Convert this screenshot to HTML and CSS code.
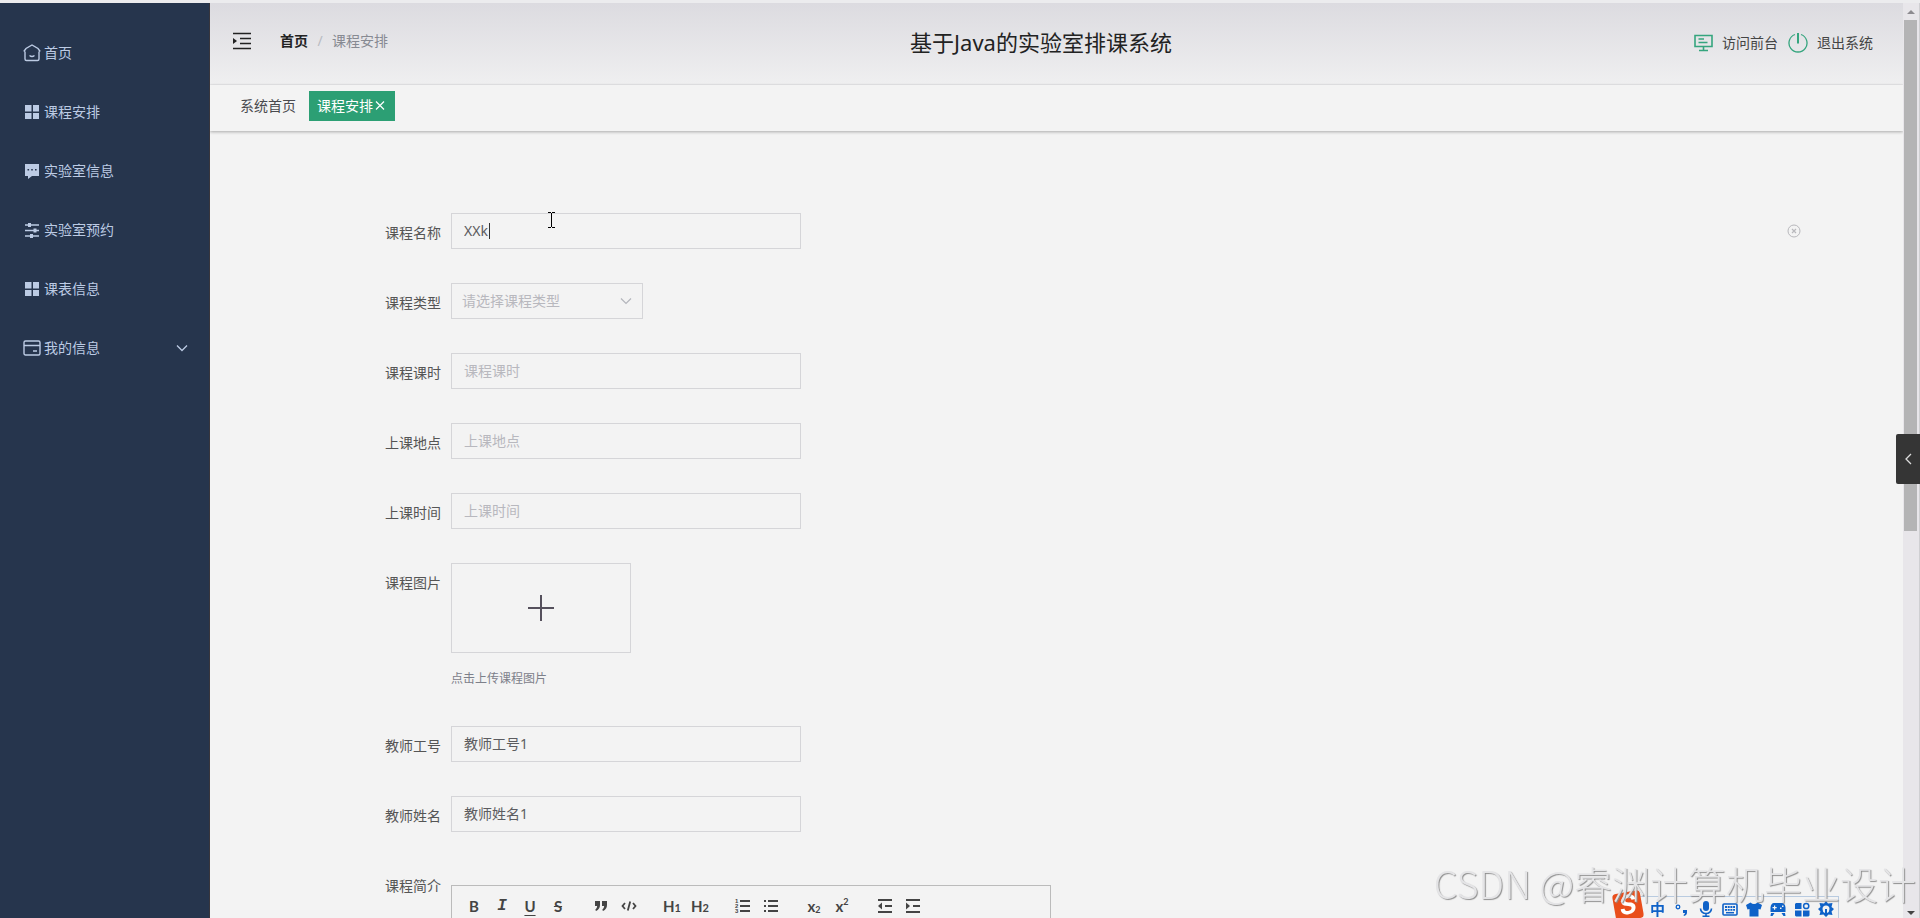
FILE: index.html
```html
<!DOCTYPE html>
<html lang="zh-CN">
<head>
<meta charset="utf-8">
<title>基于Java的实验室排课系统</title>
<link rel="stylesheet" href="styles.css">
</head>
<body>
<div class="shell">
  <nav class="sidebar">
    <a class="menu-item" href="#"><svg class="menu-icon" viewBox="0 0 18 18"><path d="M2 7.500V15q0 1.500 1.500 1.500h11Q16 16.500 16 15V7.500M.8 7.500L3 4.500 9 1l6 3.500 2.200 3M6.500 11.500q2.500 2 5 0" fill="none" stroke="currentColor" stroke-width="1.400"/></svg>首页</a>
    <a class="menu-item" href="#"><svg class="menu-icon" viewBox="0 0 18 18"><path d="M2 2h6.500v6.500H2zM10 2h6v6.500h-6zM2 10h6.500v6H2zM10 10h6v6h-6z" fill="currentColor"/></svg>课程安排</a>
    <a class="menu-item" href="#"><svg class="menu-icon" viewBox="0 0 18 18"><path fill-rule="evenodd" d="M2 2h14v12H9l-4 3v-3H2zM4.500 7v1.600h1.600V7zM8.200 7v1.600h1.600V7zM12 7v1.600h1.600V7z" fill="currentColor"/></svg>实验室信息</a>
    <a class="menu-item" href="#"><svg class="menu-icon" viewBox="0 0 18 18"><path d="M2 4h14M2 9.500h14M2 15h14" stroke="currentColor" stroke-width="1.400"/><path d="M5 2h3v4H5zM10.500 7.500h3v4h-3zM7 13h3v4H7z" fill="currentColor"/></svg>实验室预约</a>
    <a class="menu-item" href="#"><svg class="menu-icon" viewBox="0 0 18 18"><path d="M2 2h6.500v6.500H2zM10 2h6v6.500h-6zM2 10h6.500v6H2zM10 10h6v6h-6z" fill="currentColor"/></svg>课表信息</a>
    <a class="menu-item" href="#"><svg class="menu-icon" viewBox="0 0 18 18"><rect x="1" y="2" width="16" height="14" rx="1.500" fill="none" stroke="currentColor" stroke-width="1.400"/><path d="M1 6.500h16M10 12h4" stroke="currentColor" stroke-width="1.400"/></svg>我的信息<svg class="menu-arrow" viewBox="0 0 12 12"><path d="M1 3.500l5 5 5-5" fill="none" stroke="currentColor" stroke-width="1.300"/></svg></a>
  </nav>

  <div class="main">
    <header class="header">
      <div class="header-left">
        <button class="fold" type="button" aria-label="收起菜单"><svg viewBox="0 0 20 18"><path d="M1 1.500h18M8 6.500h11M8 11.500h11M1 16.500h18" stroke="#222" stroke-width="1.300"/><path d="M1 6l4 3-4 3z" fill="#222"/></svg></button>
        <a class="crumb-home" href="#">首页</a><span class="crumb-slash">/</span><span class="crumb">课程安排</span>
      </div>
      <h1 class="title">基于Java的实验室排课系统</h1>
      <div class="header-right">
        <a class="action" href="#"><svg class="monitor" viewBox="0 0 19 18"><path d="M1 1.500h17v11H1zM9.500 12.500V16M5 16.500h9M4.500 5H10M4.500 8.500h9" fill="none" stroke="currentColor" stroke-width="1.600"/></svg>访问前台</a>
        <a class="action" href="#"><svg class="power" viewBox="0 0 20 20"><path d="M7 1.500a9 9 0 1 0 6 0" fill="none" stroke="currentColor" stroke-width="1.300"/><path d="M10 0v10.500" stroke="currentColor" stroke-width="2"/></svg>退出系统</a>
      </div>
    </header>

    <div class="tabs">
      <a class="tab" href="#">系统首页</a>
      <a class="tab tab-active" href="#">课程安排<svg class="tab-close" viewBox="0 0 14 14"><path d="M3 2.500l8 8M11 2.500l-8 8" stroke="#fff" stroke-width="1.200"/></svg></a>
    </div>

    <form class="form">
      <div class="row">
        <label class="label" for="name">课程名称</label>
        <div class="field"><input class="input" id="name" type="text" value="XXk"><i class="caret"></i></div>
        <button class="clear" type="button" aria-label="清除"><svg viewBox="0 0 14 14"><circle cx="7" cy="7" r="6" fill="none" stroke="#b8b8bc"/><path d="M5 5l4 4M9 5l-4 4" stroke="#b8b8bc" stroke-width="1.200"/></svg></button>
      </div>
      <div class="row">
        <label class="label" for="type">课程类型</label>
        <div class="field"><select class="input select" id="type"><option>请选择课程类型</option></select><svg class="select-arrow" viewBox="0 0 12 12"><path d="M1 3.500l5 5 5-5" fill="none" stroke="#b4b6bc" stroke-width="1.200"/></svg></div>
      </div>
      <div class="row">
        <label class="label" for="hours">课程课时</label>
        <div class="field"><input class="input" id="hours" type="text" placeholder="课程课时"></div>
      </div>
      <div class="row">
        <label class="label" for="place">上课地点</label>
        <div class="field"><input class="input" id="place" type="text" placeholder="上课地点"></div>
      </div>
      <div class="row">
        <label class="label" for="time">上课时间</label>
        <div class="field"><input class="input" id="time" type="text" placeholder="上课时间"></div>
      </div>
      <div class="row">
        <label class="label" for="picture">课程图片</label>
        <div class="field">
          <button class="upload" id="picture" type="button" aria-label="上传图片"><svg viewBox="0 0 26 26"><path d="M0 13h26M13 0v26" stroke="#55505c" stroke-width="2"/></svg></button>
          <p class="hint">点击上传课程图片</p>
        </div>
      </div>
      <div class="row">
        <label class="label" for="teacher-id">教师工号</label>
        <div class="field"><input class="input" id="teacher-id" type="text" value="教师工号1"></div>
      </div>
      <div class="row">
        <label class="label" for="teacher-name">教师姓名</label>
        <div class="field"><input class="input" id="teacher-name" type="text" value="教师姓名1"></div>
      </div>
      <div class="row">
        <span class="label">课程简介</span>
        <div class="editor">
          <div class="toolbar">
            <div class="tools">
              <button class="tool" type="button">B</button>
              <button class="tool tool-italic" type="button">I</button>
              <button class="tool tool-underline" type="button">U</button>
              <button class="tool tool-strike" type="button">S</button>
            </div>
            <div class="tools">
              <button class="tool" type="button" aria-label="引用"><svg viewBox="0 0 18 18"><path d="M3 4h5v4q0 4-4 6l-.7-1.200Q5 11.500 5.200 9H3zM10 4h5v4q0 4-4 6l-.7-1.200q1.700-1.300 1.900-3.800H10z" fill="#444"/></svg></button>
              <button class="tool" type="button" aria-label="代码"><svg viewBox="0 0 18 18"><path d="M5 6L2.500 9 5 12M13 6l2.500 3L13 12M10.200 4.500l-2.400 9" fill="none" stroke="#444" stroke-width="1.800"/></svg></button>
            </div>
            <div class="tools">
              <button class="tool" type="button">H<small class="digit">1</small></button>
              <button class="tool" type="button">H<small class="digit">2</small></button>
            </div>
            <div class="tools">
              <button class="tool" type="button" aria-label="有序列表"><svg viewBox="0 0 18 18"><path d="M6 4h10M6 9h10M6 14h10" stroke="#444" stroke-width="2"/><text class="tiny" x="1" y="6">1</text><text class="tiny" x="1" y="11">2</text><text class="tiny" x="1" y="16">3</text></svg></button>
              <button class="tool" type="button" aria-label="无序列表"><svg viewBox="0 0 18 18"><path d="M6 4h10M6 9h10M6 14h10M2 4h2M2 9h2M2 14h2" stroke="#444" stroke-width="2"/></svg></button>
            </div>
            <div class="tools">
              <button class="tool" type="button">x<sub>2</sub></button>
              <button class="tool" type="button">x<sup>2</sup></button>
            </div>
            <div class="tools">
              <button class="tool" type="button" aria-label="减少缩进"><svg viewBox="0 0 18 18"><path d="M2 3h14M9 9h7M2 15h14" stroke="#444" stroke-width="2"/><path d="M6 5.500v7L2 9z" fill="#444"/></svg></button>
              <button class="tool" type="button" aria-label="增加缩进"><svg viewBox="0 0 18 18"><path d="M2 3h14M9 9h7M2 15h14" stroke="#444" stroke-width="2"/><path d="M2 5.500v7L6 9z" fill="#444"/></svg></button>
            </div>
          </div>
        </div>
      </div>
    </form>
  </div>

  <div class="scrollbar">
    <svg class="scroll-arrow" viewBox="0 0 8 4"><path d="M0 4l4-4 4 4z" fill="#8d8b90"/></svg>
    <div class="thumb"></div>
    <svg class="scroll-arrow scroll-down" viewBox="0 0 8 4"><path d="M0 0l4 4 4-4z" fill="#444"/></svg>
  </div>
</div>

<button class="drawer" type="button" aria-label="展开"><svg viewBox="0 0 8 12"><path d="M7 1L2 6l5 5" fill="none" stroke="#ddd" stroke-width="1.300"/></svg></button>

<svg class="pointer" viewBox="0 0 7 16"><path d="M0 .5h3M4 .5h3M3.500 1v14M0 15.500h3M4 15.500h3" stroke="#000"/></svg>

<div class="ime">
  <span class="ime-logo">S</span>
  <div class="ime-tools">
    <b class="ime-lang">中</b>
    <svg viewBox="0 0 16 16"><circle cx="4" cy="6" r="1.800" fill="none" stroke="currentColor" stroke-width="1.300"/><path d="M9 9h4v2.500q0 2.500-3 3.500l-.5-1q1.500-.8 1.500-2H9z" fill="currentColor"/></svg>
    <svg viewBox="0 0 16 16"><rect x="5" y="0" width="6" height="10" rx="3" fill="currentColor"/><path d="M2.500 7.500a5.500 5 0 0 0 11 0M8 12.500V15M4.500 15.200h7" fill="none" stroke="currentColor" stroke-width="1.600"/></svg>
    <svg viewBox="0 0 16 16"><rect x="1" y="3" width="14" height="11" rx="1" fill="none" stroke="currentColor" stroke-width="1.600"/><path d="M3 6h10M3 8.800h10" stroke="currentColor" stroke-width="1.800" stroke-dasharray="2 .7"/><path d="M4 11.700h8" stroke="currentColor" stroke-width="1.500"/></svg>
    <svg viewBox="0 0 16 16"><path d="M4.500 1.500q3.500 3 7 0L16 4l-1.500 4.500-2-.5v7.500h-9V8l-2 .5L0 4z" fill="currentColor"/></svg>
    <svg viewBox="0 0 16 16"><path fill-rule="evenodd" d="M4 2h8q3 0 3.500 4.500V11h-15V6.500Q1 2 4 2zM4 4.500V6H2.500v1.200H4v1.500h1.200V7.200h1.500V6H5.200V4.500zM10 6.500V8h1.500V6.500zM12 4.500V6h1.500V4.500zM1 12h3.500L2.500 15H.5zM11.500 12H15l.5 3h-2z" fill="currentColor"/></svg>
    <svg viewBox="0 0 16 16"><path d="M2 2h5.500v6H1V3zM1 9.500h6.500v6H2l-1-1zM9 9.500h6.500v5l-1 1H9z" fill="currentColor"/><circle cx="12.200" cy="5" r="2.600" fill="none" stroke="currentColor" stroke-width="1.500"/></svg>
    <svg viewBox="0 0 16 16"><path fill-rule="evenodd" d="M8 0l2 2.500 4.500-.5-1 4L16 8l-2.500 2.500 1 3.500-4-.5L8 16l-2.500-2.500-4 .5 1-3.500L0 8l2.500-2-1-4 4.500.5zM7 12V8h2v4q2.500-1 2.500-4a3.500 3.500 0 0 0-7 0q0 3 2.500 4z" fill="currentColor"/></svg>
  </div>
</div>

<div class="watermark">CSDN @睿渊计算机毕业设计</div>
</body>
</html>
```

FILE: styles.css
```css
* { box-sizing: border-box; }

body {
  margin: 0;
  height: 100vh;
  overflow: hidden;
  background: #f3f3f3;
  color: #555;
  font: 14px/20px "Noto Sans", "Noto Sans CJK SC", sans-serif;
}

a { color: inherit; text-decoration: none; }
button { padding: 0; border: 0; background: none; color: inherit; font: inherit; }
svg { display: block; }

.shell {
  display: flex;
  height: 100%;
  border-top: 3px solid #ececee;
}

/* Sidebar */
.sidebar {
  flex: 0 0 210px;
  padding-top: 20px;
  border-right: 1px solid #38363d;
  background: #26354d;
  color: #bccbe4;
}
.menu-item {
  display: flex;
  align-items: center;
  gap: 3px;
  height: 59px;
  padding: 0 20px 0 23px;
}
.menu-icon { width: 18px; height: 18px; }
.menu-arrow { width: 14px; height: 12px; margin-left: auto; }

/* Main column */
.main { flex: 1; min-width: 0; overflow: hidden; }

.header {
  display: flex;
  align-items: center;
  justify-content: space-between;
  height: 82px;
  padding: 0 30px 2px 22px;
  border-bottom: 1px solid #e8e8ea;
  background: linear-gradient(#dcdbe0, #efeff0);
}
.header-left { display: flex; align-items: center; padding-bottom: 3px; }
.fold { margin-right: 28px; }
.fold svg { width: 20px; height: 18px; }
.crumb-home { color: #222; font-weight: 700; }
.crumb-slash { width: 24px; color: #b8bbc2; text-align: center; }
.crumb { color: #878a92; }
.title {
  margin: 0;
  padding-bottom: 2px;
  color: #222;
  font-size: 22px;
  font-weight: 400;
  line-height: 32px;
}
.header-right { display: flex; gap: 10px; color: #444; }
.action { display: flex; align-items: center; gap: 9px; }
.action svg { color: #35a57e; }
.monitor { width: 19px; height: 18px; }
.power { width: 20px; height: 20px; }

.tabs {
  display: flex;
  gap: 5px;
  height: 46px;
  padding: 6px 22px;
  box-shadow: 0 1px 3px rgba(0, 0, 0, .3);
}
.tab {
  display: flex;
  align-items: center;
  height: 30px;
  padding: 0 8px;
  color: #4a4a4e;
}
.tab-active { background: #2c9f74; color: #fff; }
.tab-close { width: 14px; height: 14px; }

/* Form */
.form {
  display: flex;
  flex-direction: column;
  gap: 30px;
  padding: 82px 102px 0 80px;
}
.row { display: flex; align-items: flex-start; }
.label {
  flex: 0 0 161px;
  padding-right: 10px;
  line-height: 40px;
  text-align: right;
}
.field { position: relative; }
.input {
  display: block;
  width: 350px;
  height: 36px;
  padding: 0 12px 2px;
  border: 1px solid #d5d5d8;
  border-radius: 0;
  outline: 0;
  background: transparent;
  color: #5c5c60;
  font: inherit;
}
.input::placeholder { color: #b8b8be; opacity: 1; }
.select {
  width: 192px;
  padding: 0 10px;
  appearance: none;
  color: #b8b8be;
}
.select-arrow {
  position: absolute;
  top: 12px;
  right: 11px;
  width: 12px;
  height: 12px;
}
.caret {
  position: absolute;
  top: 10px;
  left: 38px;
  width: 1px;
  height: 16px;
  background: #333;
}
.clear { margin-left: auto; padding: 11px 0; }
.clear svg { width: 14px; height: 14px; }

.upload {
  display: flex;
  align-items: center;
  justify-content: center;
  width: 180px;
  height: 90px;
  border: 1px solid #d5d5d8;
}
.upload svg { width: 26px; height: 26px; }
.hint {
  margin: 16px 0 7px;
  color: #7d808a;
  font-size: 12px;
}

/* Rich text editor */
.editor {
  width: 600px;
  height: 200px;
  margin-top: 19px;
  border: 1px solid #bbb;
}
.toolbar { display: flex; gap: 15px; padding: 8px; }
.tools { display: flex; }
.tool {
  display: flex;
  align-items: center;
  justify-content: center;
  width: 28px;
  height: 24px;
  color: #444;
  font: 700 15px/24px Lato, sans-serif;
}
.tool svg { width: 18px; height: 18px; }
.tool-italic { font: italic 700 16px/24px "Liberation Mono", monospace; }
.tool-underline { text-decoration: underline; text-underline-offset: 3px; }
.tool-strike { text-decoration: line-through; }
.digit { padding-top: 3px; font-size: 11px; }
.tool sub { padding-top: 8px; font-size: 9px; line-height: 12px; }
.tool sup { padding-bottom: 8px; font-size: 9px; line-height: 12px; }
.tiny { fill: #444; font: 700 6px "Liberation Sans", sans-serif; }

/* Scrollbar */
.scrollbar {
  display: flex;
  flex: 0 0 16px;
  flex-direction: column;
  align-items: center;
  padding: 7px 2px 3px 1px;
  border-right: 1px solid #cfcfd2;
  background: #e8e6ea;
}
.scroll-arrow { flex: none; width: 8px; height: 4px; }
.thumb {
  width: 13px;
  height: 56.5%;
  margin-top: 6px;
  background: #b4b4b5;
}
.scroll-down { margin-top: auto; }

/* Overlays */
.drawer {
  position: fixed;
  top: 434px;
  right: 0;
  display: flex;
  align-items: center;
  justify-content: center;
  width: 24px;
  height: 50px;
  border-radius: 2px 0 0 2px;
  background: #353535;
}
.drawer svg { width: 8px; height: 12px; }

.pointer {
  position: fixed;
  top: 212px;
  left: 548px;
  width: 7px;
  height: 16px;
}

.ime {
  position: fixed;
  right: 81px;
  bottom: -6px;
  display: flex;
  align-items: flex-end;
  color: #0f62c8;
}
.ime-logo {
  width: 28px;
  height: 28px;
  margin: 0 -12px 4px 0;
  border-radius: 4px;
  background: #e94e1b;
  color: #fff;
  font: italic 700 26px/26px Inter, sans-serif;
  text-align: center;
  transform: rotate(-10deg);
}
.ime-tools {
  display: flex;
  align-items: center;
  gap: 8px;
  height: 28px;
  padding: 0 4px 2px 19px;
  border: 1px solid #b9cbe0;
}
.ime-tools svg { width: 16px; height: 16px; }
.ime-lang { width: 16px; font-size: 15px; }

.watermark {
  position: fixed;
  right: 4px;
  bottom: 10px;
  color: #e4e4e6;
  font: 300 38px/50px "Noto Sans CJK SC", sans-serif;
  text-shadow: 1px 1px 1px #8f8f8f;
  white-space: nowrap;
}
```
